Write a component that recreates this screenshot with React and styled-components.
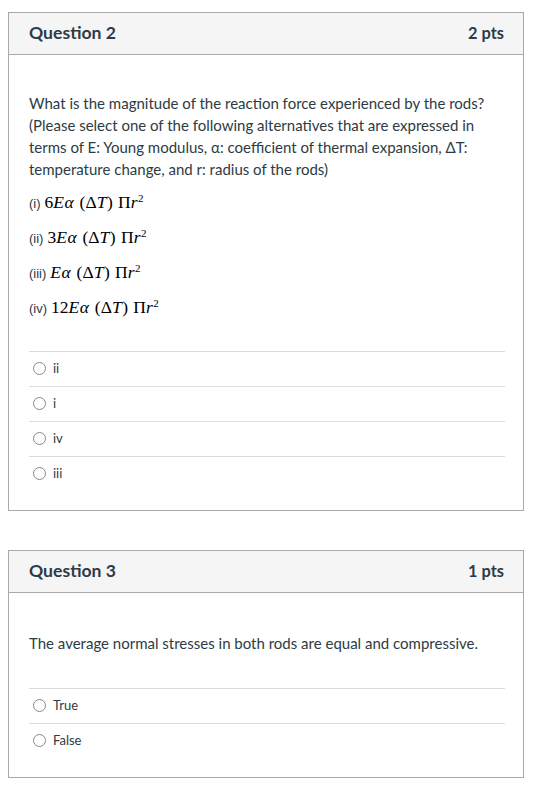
import React from 'react';
import styled, { createGlobalStyle } from 'styled-components';

const GlobalStyle = createGlobalStyle`
  html, body {
    margin: 0;
    padding: 0;
    background: #fff;
  }
  body {
    font-family: Lato, "Open Sans", sans-serif;
    color: #2d3b45;
  }
`;

const Page = styled.div`
  padding: 12px 0 12px 8px;
  display: flex;
  flex-direction: column;
  gap: 39px;
`;

const Card = styled.div`
  width: 516px;
  box-sizing: border-box;
  border: 1px solid #a9a9a9;
  background: #fff;
`;

const Header = styled.div`
  height: 42px;
  box-sizing: border-box;
  display: flex;
  align-items: center;
  justify-content: space-between;
  padding: 0 19px 2px 20px;
  background: #f5f5f5;
  border-bottom: 1px solid #a9a9a9;
  font-weight: 700;
  font-size: 17.6px;
  color: #2d3b45;
`;

const Points = styled.span`
  font-size: 16.4px;
`;

const Body = styled.div`
  padding: ${(p) => p.$top}px 18px 19px 20px;
`;

const Text = styled.p`
  margin: 0;
  font-size: 15px;
  line-height: 22px;
`;

const Formulas = styled.div`
  margin-top: 12px;
  display: flex;
  flex-direction: column;
  gap: 14px;
`;

const Formula = styled.div`
  display: flex;
  align-items: baseline;
  gap: 4px;
  height: 21px;
`;

const Tag = styled.span`
  font-family: "Liberation Sans", Arial, sans-serif;
  font-size: 13px;
  color: #2d3b45;
`;

const Math = styled.span`
  font-family: "Liberation Serif", "DejaVu Serif", serif;
  font-size: 17.5px;
  color: #000;
  white-space: nowrap;
  word-spacing: 1px;
`;

const V = styled.i`
  font-style: italic;
  margin-right: 0.5px;
`;

const Sup = styled.sup`
  font-size: 11px;
  vertical-align: 6px;
  line-height: 0;
`;

const Answers = styled.div`
  margin-top: ${(p) => p.$top}px;
`;

const Answer = styled.label`
  display: flex;
  align-items: center;
  gap: 7px;
  height: 35px;
  box-sizing: border-box;
  border-top: 1px solid #dcdcdc;
  padding: 0 0 2px 4px;
  font-size: 13px;
  color: #2d3b45;
`;

const Radio = styled.span`
  width: 11px;
  height: 11px;
  border: 1px solid #8a8a8a;
  border-radius: 50%;
  background: #fff;
  flex-shrink: 0;
`;

const Term = ({ lead }) => (
  <Math>
    {lead}
    <V>E</V>
    <V>α</V> (Δ<V>T</V>) Π<V>r</V>
    <Sup>2</Sup>
  </Math>
);

const Question = ({ title, pts, top, answersTop, children, answers }) => (
  <Card>
    <Header>
      <span>{title}</span>
      <Points>{pts}</Points>
    </Header>
    <Body $top={top}>
      {children}
      <Answers $top={answersTop}>
        {answers.map((a) => (
          <Answer key={a}>
            <Radio />
            {a}
          </Answer>
        ))}
      </Answers>
    </Body>
  </Card>
);

const formulas = [
  ['(i)', '6'],
  ['(ii)', '3'],
  ['(iii)', ''],
  ['(iv)', '12'],
];

export default function App() {
  return (
    <>
      <GlobalStyle />
      <Page>
        <Question
          title="Question 2"
          pts="2 pts"
          top={37}
          answersTop={33}
          answers={['ii', 'i', 'iv', 'iii']}
        >
          <Text>
            What is the magnitude of the reaction force experienced by the rods?
            (Please select one of the following alternatives that are expressed in
            terms of E: Young modulus, α: coefficient of thermal expansion, ΔT:
            temperature change, and r: radius of the rods)
          </Text>
          <Formulas>
            {formulas.map(([tag, lead]) => (
              <Formula key={tag}>
                <Tag>{tag}</Tag>
                <Term lead={lead} />
              </Formula>
            ))}
          </Formulas>
        </Question>
        <Question
          title="Question 3"
          pts="1 pts"
          top={39}
          answersTop={34}
          answers={['True', 'False']}
        >
          <Text>The average normal stresses in both rods are equal and compressive.</Text>
        </Question>
      </Page>
    </>
  );
}
